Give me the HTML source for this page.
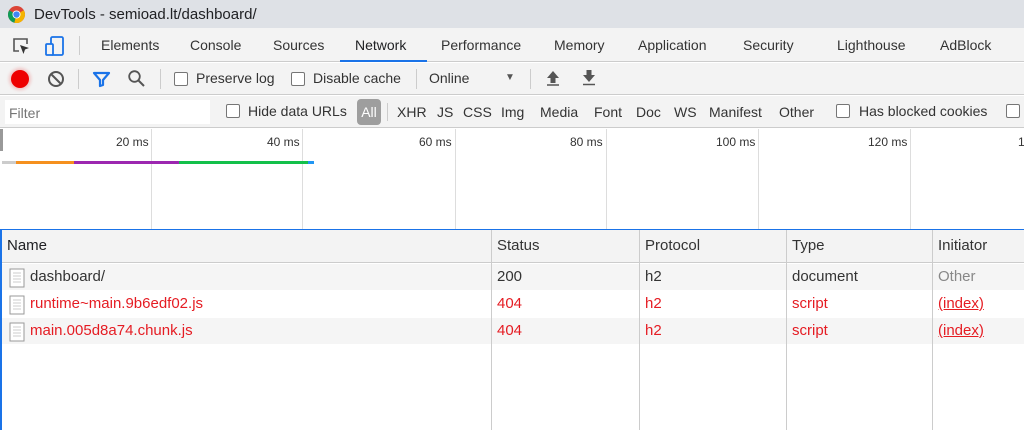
<!DOCTYPE html>
<html><head><style>
*{margin:0;padding:0;box-sizing:border-box}
body{width:1024px;height:430px;overflow:hidden;background:#fff;font-family:"Liberation Sans",sans-serif;font-size:14px;color:#333;position:relative}
.a{position:absolute;white-space:nowrap}
.t{font-size:15px}
.cb{position:absolute;width:14px;height:14px;border:1px solid #767676;border-radius:2px;background:#fff}
.vl{position:absolute;width:1px;background:#ccc}
</style></head><body>
<div class="a" style="left:0;top:0;width:1024px;height:28px;background:#dee1e6"></div>
<svg class="a" style="left:8px;top:6px" width="17" height="17" viewBox="0 0 16 16"><circle cx="8" cy="8" r="8" fill="#db4437"/><path d="M8 8 L1.1 4 A8 8 0 0 0 6 15.8Z" fill="#0f9d58"/><path d="M8 8 L6 15.8 A8 8 0 0 0 14.9 4Z" fill="#f4b400"/><circle cx="8" cy="8" r="3.8" fill="#fff"/><circle cx="8" cy="8" r="3" fill="#4285f4"/></svg>
<div class="a" style="left:34px;top:6px;font-size:15px;color:#202124">DevTools - semioad.lt/dashboard/</div>

<div class="a" style="left:0;top:28px;width:1024px;height:34px;background:#f3f3f3;border-bottom:1px solid #ccc"></div>
<svg class="a" style="left:11px;top:36px" width="20" height="20" viewBox="0 0 20 20"><path d="M8 15H3V3h13v5" fill="none" stroke="#555" stroke-width="1.6"/><path d="M9 9l9 3-4 1.5L12.5 18z" fill="#333"/></svg>
<svg class="a" style="left:44px;top:35px" width="22" height="22" viewBox="0 0 22 22"><rect x="7" y="2" width="12" height="18" rx="1.5" fill="none" stroke="#1a73e8" stroke-width="1.8"/><rect x="2" y="9" width="7" height="11" rx="1" fill="#f3f3f3" stroke="#1a73e8" stroke-width="1.8"/></svg>
<div class="vl" style="left:79px;top:36px;height:19px"></div>
<div class="a" style="left:101px;top:37px;color:#333">Elements</div>
<div class="a" style="left:190px;top:37px">Console</div>
<div class="a" style="left:273px;top:37px">Sources</div>
<div class="a" style="left:355px;top:37px;color:#202124">Network</div>
<div class="a" style="left:340px;top:60px;width:87px;height:2px;background:#1a73e8"></div>
<div class="a" style="left:441px;top:37px">Performance</div>
<div class="a" style="left:554px;top:37px">Memory</div>
<div class="a" style="left:638px;top:37px">Application</div>
<div class="a" style="left:743px;top:37px">Security</div>
<div class="a" style="left:837px;top:37px">Lighthouse</div>
<div class="a" style="left:940px;top:37px">AdBlock</div>

<div class="a" style="left:0;top:63px;width:1024px;height:32px;background:#f3f3f3;border-bottom:1px solid #ccc"></div>
<div class="a" style="left:11px;top:70px;width:18px;height:18px;border-radius:50%;background:#e00;box-shadow:0 0 3px 2px rgba(230,0,0,.2)"></div>
<svg class="a" style="left:47px;top:70px" width="18" height="18" viewBox="0 0 18 18"><circle cx="9" cy="9" r="7" fill="none" stroke="#555" stroke-width="2"/><path d="M4 4l10 10" stroke="#555" stroke-width="2"/></svg>
<div class="vl" style="left:78px;top:69px;height:20px"></div>
<svg class="a" style="left:92px;top:70px" width="19" height="18" viewBox="0 0 19 18"><path d="M2 3h15l-6 7v5l-3 1v-6z" fill="none" stroke="#1a73e8" stroke-width="2.2" stroke-linejoin="round"/></svg>
<svg class="a" style="left:127px;top:69px" width="19" height="19" viewBox="0 0 19 19"><circle cx="7.5" cy="7.5" r="5.3" fill="none" stroke="#555" stroke-width="1.8"/><path d="M11.5 11.5l5.5 5.5" stroke="#555" stroke-width="2"/></svg>
<div class="vl" style="left:160px;top:69px;height:20px"></div>
<div class="cb" style="left:174px;top:72px"></div>
<div class="a" style="left:196px;top:70px">Preserve log</div>
<div class="cb" style="left:291px;top:72px"></div>
<div class="a" style="left:313px;top:70px">Disable cache</div>
<div class="vl" style="left:416px;top:69px;height:20px"></div>
<div class="a" style="left:429px;top:70px">Online</div>
<div class="a" style="left:505px;top:72px;font-size:10px;color:#555">▼</div>
<div class="vl" style="left:530px;top:69px;height:20px"></div>
<svg class="a" style="left:546px;top:70px" width="14" height="16" viewBox="0 0 14 16"><path d="M7 1L1 8h3.5v5h5V8H13z" fill="#555"/><path d="M1 15h12" stroke="#555" stroke-width="1.5"/></svg>
<svg class="a" style="left:582px;top:69px" width="14" height="17" viewBox="0 0 14 17"><path d="M7 13L1 6h3.5V1h5v5H13z" fill="#555"/><path d="M1 15.5h12" stroke="#555" stroke-width="1.5"/></svg>

<div class="a" style="left:0;top:96px;width:1024px;height:32px;background:#f3f3f3;border-bottom:1px solid #ccc"></div>
<div class="a" style="left:5px;top:100px;width:205px;height:24px;background:#fff"></div>
<div class="a" style="left:9px;top:105px;color:#757575">Filter</div>
<div class="cb" style="left:226px;top:104px"></div>
<div class="a" style="left:248px;top:103px">Hide data URLs</div>
<div class="a" style="left:357px;top:99px;width:24px;height:26px;border-radius:4px;background:#9e9e9e;color:#fff;text-align:center;line-height:26px">All</div>
<div class="vl" style="left:387px;top:103px;height:18px"></div>
<div class="a" style="left:397px;top:104px">XHR</div>
<div class="a" style="left:437px;top:104px">JS</div>
<div class="a" style="left:463px;top:104px">CSS</div>
<div class="a" style="left:501px;top:104px">Img</div>
<div class="a" style="left:540px;top:104px">Media</div>
<div class="a" style="left:594px;top:104px">Font</div>
<div class="a" style="left:636px;top:104px">Doc</div>
<div class="a" style="left:674px;top:104px">WS</div>
<div class="a" style="left:709px;top:104px">Manifest</div>
<div class="a" style="left:779px;top:104px">Other</div>
<div class="cb" style="left:836px;top:104px"></div>
<div class="a" style="left:859px;top:103px">Has blocked cookies</div>
<div class="cb" style="left:1006px;top:104px"></div>

<div class="a" style="left:0;top:129px;width:3px;height:22px;background:#999"></div>
<div class="vl" style="left:151px;top:129px;height:100px;background:#ddd"></div>
<div class="vl" style="left:302px;top:129px;height:100px;background:#ddd"></div>
<div class="vl" style="left:455px;top:129px;height:100px;background:#ddd"></div>
<div class="vl" style="left:606px;top:129px;height:100px;background:#ddd"></div>
<div class="vl" style="left:758px;top:129px;height:100px;background:#ddd"></div>
<div class="vl" style="left:910px;top:129px;height:100px;background:#ddd"></div>
<div class="a" style="left:116px;top:135px;font-size:12px">20 ms</div>
<div class="a" style="left:267px;top:135px;font-size:12px">40 ms</div>
<div class="a" style="left:419px;top:135px;font-size:12px">60 ms</div>
<div class="a" style="left:570px;top:135px;font-size:12px">80 ms</div>
<div class="a" style="left:716px;top:135px;font-size:12px">100 ms</div>
<div class="a" style="left:868px;top:135px;font-size:12px">120 ms</div>
<div class="a" style="left:1018px;top:135px;font-size:12px">1</div>
<div class="a" style="left:2px;top:161px;width:14px;height:3px;background:#ccc"></div>
<div class="a" style="left:16px;top:161px;width:58px;height:3px;background:#f5901e"></div>
<div class="a" style="left:74px;top:161px;width:105px;height:3px;background:#9c27b0"></div>
<div class="a" style="left:179px;top:161px;width:129px;height:3px;background:#13c04a"></div>
<div class="a" style="left:308px;top:161px;width:6px;height:3px;background:#2196f3"></div>

<div class="a" style="left:0;top:229px;width:1024px;height:1px;background:#1a73e8"></div>
<div class="a" style="left:0;top:229px;width:2px;height:201px;background:#1a73e8"></div>
<div class="a" style="left:2px;top:230px;width:1022px;height:33px;background:#f3f3f3;border-bottom:1px solid #ccc"></div>
<div class="a" style="left:2px;top:264px;width:1022px;height:26px;background:#f5f5f5"></div>
<div class="a" style="left:2px;top:318px;width:1022px;height:26px;background:#f5f5f5"></div>
<div class="vl" style="left:491px;top:230px;height:200px"></div>
<div class="vl" style="left:639px;top:230px;height:200px"></div>
<div class="vl" style="left:786px;top:230px;height:200px"></div>
<div class="vl" style="left:932px;top:230px;height:200px"></div>
<div class="a t" style="left:7px;top:237px;color:#202124">Name</div>
<div class="a t" style="left:497px;top:237px">Status</div>
<div class="a t" style="left:645px;top:237px">Protocol</div>
<div class="a t" style="left:792px;top:237px">Type</div>
<div class="a t" style="left:938px;top:237px">Initiator</div>

<svg class="a" style="left:9px;top:268px" width="16" height="20" viewBox="0 0 16 20"><rect x="1" y="1" width="14" height="18" fill="#fff" stroke="#999"/><path d="M4 5h8M4 8h8M4 11h8M4 14h8" stroke="#ccc"/></svg>
<svg class="a" style="left:9px;top:295px" width="16" height="20" viewBox="0 0 16 20"><rect x="1" y="1" width="14" height="18" fill="#fff" stroke="#999"/><path d="M4 5h8M4 8h8M4 11h8M4 14h8" stroke="#ccc"/></svg>
<svg class="a" style="left:9px;top:322px" width="16" height="20" viewBox="0 0 16 20"><rect x="1" y="1" width="14" height="18" fill="#fff" stroke="#999"/><path d="M4 5h8M4 8h8M4 11h8M4 14h8" stroke="#ccc"/></svg>

<div class="a t" style="left:30px;top:268px">dashboard/</div>
<div class="a t" style="left:497px;top:268px">200</div>
<div class="a t" style="left:645px;top:268px">h2</div>
<div class="a t" style="left:792px;top:268px">document</div>
<div class="a t" style="left:938px;top:268px;color:#888">Other</div>

<div class="a t" style="left:30px;top:295px;color:#e51c23">runtime~main.9b6edf02.js</div>
<div class="a t" style="left:497px;top:295px;color:#e51c23">404</div>
<div class="a t" style="left:645px;top:295px;color:#e51c23">h2</div>
<div class="a t" style="left:792px;top:295px;color:#e51c23">script</div>
<div class="a t" style="left:938px;top:295px;color:#e51c23;text-decoration:underline">(index)</div>

<div class="a t" style="left:30px;top:322px;color:#e51c23">main.005d8a74.chunk.js</div>
<div class="a t" style="left:497px;top:322px;color:#e51c23">404</div>
<div class="a t" style="left:645px;top:322px;color:#e51c23">h2</div>
<div class="a t" style="left:792px;top:322px;color:#e51c23">script</div>
<div class="a t" style="left:938px;top:322px;color:#e51c23;text-decoration:underline">(index)</div>
</body></html>
